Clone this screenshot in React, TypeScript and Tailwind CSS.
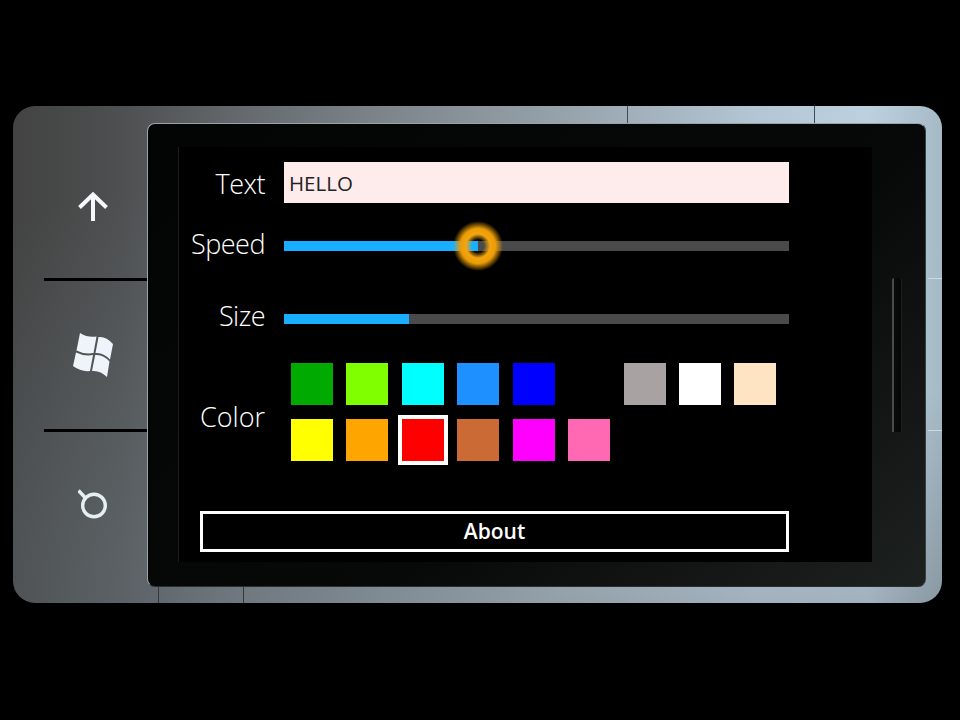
const swatches = [
  "#00aa00", "#80ff00", "#00ffff", "#1e90ff", "#0000ff", "#000000", "#a9a2a2", "#ffffff", "#ffe4c4",
  "#ffff00", "#ffa500", "#ff0000", "#cc6a35", "#ff00ff", "#ff69b4",
];

function ArrowIcon() {
  return (
    <svg width="30" height="30" viewBox="0 0 30 30" fill="none" stroke="#f4f8fa" strokeWidth="4">
      <path d="M15 29V3" />
      <path d="M1.500 15.500L15 2.500L28.500 15.500" />
    </svg>
  );
}

function WindowsIcon() {
  return (
    <svg width="42" height="46" viewBox="72 331 42 46" fill="#eef4f9">
      <path d="M80 332Q88 337 96.500 335.500L93.500 352Q84 353.500 76.500 349.500Z" />
      <path d="M98.500 336Q106 335 113 343L110 358.500Q103 351 95.500 352Z" />
      <path d="M76 351.500Q84 355.500 93 354L90 370Q81 371 73 365Z" />
      <path d="M95.200 354Q103 353 109.500 360.500L107 376Q100 369 92 370Z" />
    </svg>
  );
}

function SearchIcon() {
  return (
    <svg width="30" height="30" viewBox="0 0 30 30" fill="none" stroke="#e6f0f2" strokeWidth="3.400">
      <circle cx="16" cy="16.500" r="11.300" />
      <path d="M0.500 1.500L7.500 9" />
    </svg>
  );
}

function Slider({ fill }: { fill: string }) {
  return (
    <div className="h-[10px] w-full bg-[#4a4a4a]">
      <div className={`h-full bg-[#19aeff] ${fill}`} />
    </div>
  );
}

export default function App() {
  return (
    <div
      className="h-[720px] w-[960px] overflow-hidden bg-black pl-[13px] pt-[106px] text-white"
      style={{ fontFamily: '"Open Sans", sans-serif' }}
    >
      <div className="relative flex h-[497px] w-[929px] rounded-[22px] bg-[linear-gradient(to_top_left,rgba(0,0,0,0.18),rgba(0,0,0,0)_22%),radial-gradient(ellipse_at_25%_100%,rgba(140,160,175,0.28),rgba(140,160,175,0)_60%),linear-gradient(90deg,#424342_0%,#4e5051_12%,#666a6e_25%,#7d858b_40%,#97a4ac_60%,#b4c6d4_80%,#bdd0df_92%,#a6bac6_100%)]">
        {/* panel seams */}
        <div className="absolute left-[614px] top-0 h-[17px] w-px bg-[#3c4c58]" />
        <div className="absolute left-[801px] top-0 h-[17px] w-px bg-[#3c4c58]" />
        <div className="absolute bottom-0 left-[145px] h-[16px] w-px bg-[#33383c]" />
        <div className="absolute bottom-0 left-[230px] h-[16px] w-px bg-[#33383c]" />
        <div className="absolute right-0 top-[172px] h-px w-[14px] bg-[#cfdbe2]" />
        <div className="absolute right-0 top-[324px] h-px w-[14px] bg-[#cfdbe2]" />

        {/* hardware buttons */}
        <div className="flex w-[134px] flex-col">
          <div className="flex h-[172px] items-end justify-center pb-[56px] pl-[26px]">
            <ArrowIcon />
          </div>
          <div className="ml-[31px] h-[3px] bg-black" />
          <div className="flex h-[148px] items-center justify-center pl-[26px]">
            <WindowsIcon />
          </div>
          <div className="ml-[31px] h-[3px] bg-black" />
          <div className="flex justify-center pl-[26px] pt-[57px]">
            <SearchIcon />
          </div>
        </div>

        {/* screen */}
        <div className="mt-[17px] flex h-[464px] w-[779px] rounded-[8px] border border-[#9aa4a8] border-b-[#2a2e2e] border-r-[#3a4040] bg-[linear-gradient(140deg,#030404_0%,#070908_60%,#1d211f_100%)]">
          <div className="w-[30px]" />
          <div className="mt-[23px] flex h-[415px] w-[694px] flex-col border-l border-[#1c1e1e] bg-black pr-[83px]">
            <div className="mt-[15px] flex h-[41px] items-center">
              <span className="w-[86px] translate-y-[1px] text-right text-[27px] font-light leading-none tracking-[-0.5px]">Text</span>
              <div className="ml-[19px] flex h-full flex-1 items-center bg-[#feecec] pl-[5px] pt-[1px] text-[20.500px] text-[#222]">
                HELLO
              </div>
            </div>
            <div className="mt-[23px] flex h-[40px] items-center">
              <span className="w-[86px] -translate-y-[3px] text-right text-[27px] font-light leading-none tracking-[-0.5px]">Speed</span>
              <div className="relative ml-[19px] flex-1">
                <Slider fill="w-[194px]" />
                <div className="absolute left-[169px] top-[-20px] h-[50px] w-[50px] rounded-full bg-[radial-gradient(circle_closest-side,rgba(245,165,10,0)_24%,#f2a60f_48%,#eb9c08_70%,rgba(230,150,0,0)_100%)]" />
              </div>
            </div>
            <div className="mt-[33px] flex h-[40px] items-center">
              <span className="w-[86px] -translate-y-[4px] text-right text-[27px] font-light leading-none tracking-[-0.5px]">Size</span>
              <div className="ml-[19px] flex-1">
                <Slider fill="w-[125px]" />
              </div>
            </div>
            <div className="mt-[24px] flex items-center">
              <span className="w-[86px] translate-y-[4px] text-right text-[27px] font-light leading-none">Color</span>
              <div className="ml-[26px] grid grid-cols-[repeat(9,42px)] gap-x-[13.430px] gap-y-[14px]">
                {swatches.map((c) => (
                  <div
                    key={c}
                    className={c === "#ff0000" ? "h-[42px] outline-[4px] outline-white" : "h-[42px]"}
                    style={{ backgroundColor: c }}
                  />
                ))}
              </div>
            </div>
            <div className="ml-[21px] mt-[50px] flex h-[41px] items-center justify-center border-[3px] border-white text-[21px] font-semibold">
              About
            </div>
          </div>
          <div className="ml-[20px] h-[154px] w-[10px] self-center rounded-t-[2px] border-l-2 border-r border-l-[#464c48] border-r-[#1c201e] bg-[linear-gradient(90deg,#0a0c0b,#040505)]" />
        </div>
      </div>
    </div>
  );
}
